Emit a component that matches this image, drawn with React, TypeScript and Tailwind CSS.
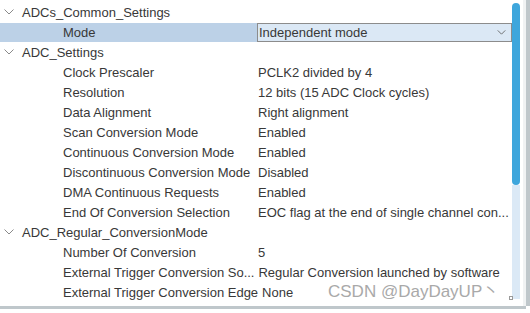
type Row =
  | { kind: 'group'; label: string }
  | { kind: 'prop'; label: string; value: string; select?: boolean }

const ROWS: Row[] = [
  { kind: 'group', label: 'ADCs_Common_Settings' },
  { kind: 'prop', label: 'Mode', value: 'Independent mode', select: true },
  { kind: 'group', label: 'ADC_Settings' },
  { kind: 'prop', label: 'Clock Prescaler', value: 'PCLK2 divided by 4' },
  { kind: 'prop', label: 'Resolution', value: '12 bits (15 ADC Clock cycles)' },
  { kind: 'prop', label: 'Data Alignment', value: 'Right alignment' },
  { kind: 'prop', label: 'Scan Conversion Mode', value: 'Enabled' },
  { kind: 'prop', label: 'Continuous Conversion Mode', value: 'Enabled' },
  { kind: 'prop', label: 'Discontinuous Conversion Mode', value: 'Disabled' },
  { kind: 'prop', label: 'DMA Continuous Requests', value: 'Enabled' },
  {
    kind: 'prop',
    label: 'End Of Conversion Selection',
    value: 'EOC flag at the end of single channel con...',
  },
  { kind: 'group', label: 'ADC_Regular_ConversionMode' },
  { kind: 'prop', label: 'Number Of Conversion', value: '5' },
  {
    kind: 'prop',
    label: 'External Trigger Conversion So...',
    value: 'Regular Conversion launched by software',
  },
  { kind: 'prop', label: 'External Trigger Conversion Edge', value: 'None' },
]

/** Тонкая галочка-шеврон */
const Chevron = ({ className }: { className: string }) => (
  <svg className={className} viewBox="0 0 10 6" fill="none">
    <path d="M0.5 0.5 L5 5 L9.5 0.5" stroke="currentColor" strokeWidth="1" />
  </svg>
)

const GroupRow = ({ label }: { label: string }) => (
  <div className="flex h-5 items-center">
    <Chevron className="ml-[4px] mr-[8px] h-[6px] w-[10px] text-[#8a8a8a]" />
    <span>{label}</span>
  </div>
)

const PropRow = ({
  label,
  value,
  select,
}: {
  label: string
  value: string
  select?: boolean
}) => {
  if (select) {
    return (
      <div className="flex h-5 items-stretch pt-px">
        <div className="flex w-[257px] shrink-0 items-center bg-[#bcd1e7] pl-[63px]">
          {label}
        </div>
        <div className="flex w-[255px] items-center justify-between border border-[#8c8c8c] bg-[#dbe8f5] pl-[1px] pr-[5px]">
          <span>{value}</span>
          <Chevron className="h-[5px] w-[9px] text-[#5a5a5a]" />
        </div>
      </div>
    )
  }
  return (
    <div className="flex h-5 items-center">
      <span className="min-w-[258px] shrink-0 whitespace-nowrap pl-[63px] pr-[4px]">
        {label}
      </span>
      <span className="whitespace-nowrap">{value}</span>
    </div>
  )
}

const App = () => (
  <div
    className="relative h-[313px] w-[530px] overflow-hidden bg-white text-[13px] leading-none text-[#383838]"
    style={{ fontFamily: '"Liberation Sans", Arial, sans-serif' }}
  >
    <div className="flex h-[306px]">
      {/* Список свойств */}
      <div className="w-[512px] shrink-0 overflow-hidden pt-[2px]">
        {ROWS.map((row, i) =>
          row.kind === 'group' ? (
            <GroupRow key={i} label={row.label} />
          ) : (
            <PropRow
              key={i}
              label={row.label}
              value={row.value}
              select={row.select}
            />
          ),
        )}
      </div>

      {/* Полоса прокрутки */}
      <div className="flex w-[8px] shrink-0 flex-col pb-[7px] pt-[3px]">
        <div className="h-[182px] rounded-full bg-[#3ea6dc]" />
        <div className="flex-1 bg-[#dbe9f6]" />
      </div>
      <div className="w-[3px] shrink-0" />
      <div className="w-[3px] shrink-0 bg-[#f0f2f3]" />
      <div className="w-[4px] shrink-0 bg-[#bfc7cb]" />
    </div>
    <div className="h-[3px] w-[526px] bg-[#bfc7cb]" />

    {/* Водяной знак */}
    <div
      className="absolute left-[328px] top-[283px] text-[17px] leading-none text-[#a9a9a9]"
      style={{
        fontFamily:
          '"Liberation Sans", Arial, "Noto Sans CJK SC", sans-serif',
      }}
    >
      CSDN @DayDayUP丶
    </div>
    <div className="absolute left-[509px] top-[296px] h-[4px] w-[4px] border border-[#9a9a9a]" />
  </div>
)

export default App
